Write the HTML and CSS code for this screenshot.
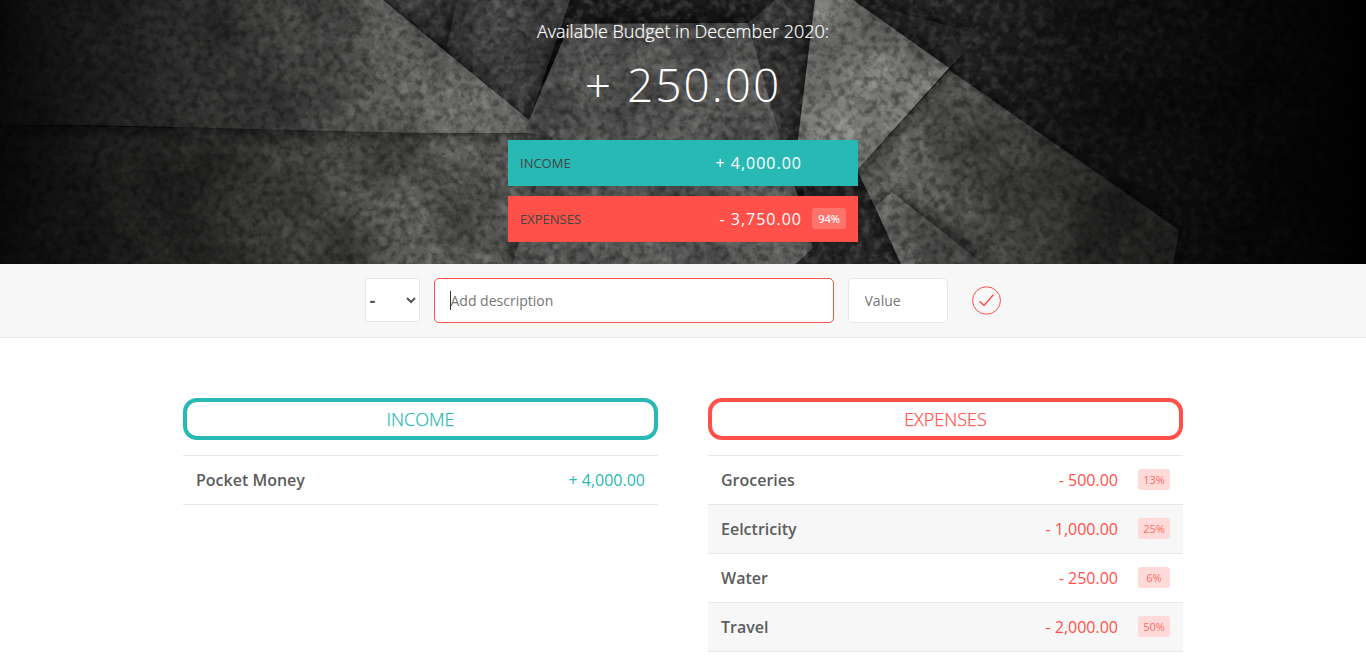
FILE: index.html
```html
<!DOCTYPE html>
<html lang="en">
<head>
<meta charset="utf-8">
<title>Budget</title>
<link rel="stylesheet" href="styles.css">
</head>
<body>
<header class="top">
  <svg class="top-bg" viewBox="0 0 1366 264" preserveAspectRatio="none" aria-hidden="true">
    <defs>
      <filter id="sh" x="-20%" y="-20%" width="140%" height="140%"><feDropShadow dx="0" dy="0" stdDeviation="9" flood-color="#000" flood-opacity=".95"/></filter>
      <filter id="noise" x="0" y="0" width="100%" height="100%">
        <feTurbulence type="fractalNoise" baseFrequency=".13" numOctaves="5" seed="7"/>
        <feColorMatrix type="matrix" values="0 0 0 0 0  0 0 0 0 0  0 0 0 0 0  3 0 0 0 -1.25"/>
      </filter>
      <filter id="noiseLight" x="0" y="0" width="100%" height="100%">
        <feTurbulence type="fractalNoise" baseFrequency=".11" numOctaves="5" seed="31"/>
        <feColorMatrix type="matrix" values="0 0 0 0 1  0 0 0 0 1  0 0 0 0 .97  3.4 0 0 0 -1.5"/>
      </filter>
      <filter id="noise2" x="0" y="0" width="100%" height="100%">
        <feTurbulence type="fractalNoise" baseFrequency=".014" numOctaves="3" seed="21"/>
        <feColorMatrix type="matrix" values="0 0 0 0 0  0 0 0 0 0  0 0 0 0 0  2.6 0 0 0 -1"/>
      </filter>
      <linearGradient id="fadeL"><stop offset="0" stop-color="#000" stop-opacity=".9"/><stop offset=".5" stop-color="#000" stop-opacity=".5"/><stop offset="1" stop-color="#000" stop-opacity="0"/></linearGradient>
      <linearGradient id="fadeR"><stop offset="0" stop-color="#000" stop-opacity="0"/><stop offset=".45" stop-color="#000" stop-opacity=".6"/><stop offset="1" stop-color="#000" stop-opacity=".98"/></linearGradient>
    </defs>
    <rect width="1366" height="264" fill="#1e1e1e"/>
    <polygon points="853,0 1366,0 1366,264 1173,264 1179,230 949,70 983,35" fill="#2b2b2b"/>
    <polygon points="0,125 530,133 553,138 536,187 512,264 0,264" fill="#62625f" filter="url(#sh)"/>
    <polygon points="383,0 457,0 446,50" fill="#454545"/>
    <polygon points="457,0 570,0 529,120 446,50" fill="#474747" filter="url(#sh)"/>
    <polygon points="0,0 383,0 529,120 553,138 530,133 435,133 87,125 0,125" fill="#6b6b67" filter="url(#sh)"/>
    <polygon points="570,24 748,23 781,140 798,197 813,248 796,264 512,264 536,187 553,138 529,120" fill="#5d5d5b" filter="url(#sh)"/>
    <polygon points="748,23 775,0 815,0 798,140 781,140" fill="#363636"/>
    <polygon points="857,170 901,264 796,264 813,248 798,197" fill="#262626"/>
    <polygon points="949,70 1179,230 1173,264 983,264 892,192 875,207 857,170" fill="#636361" filter="url(#sh)"/>
    <polygon points="875,207 892,192 983,264 901,264" fill="#686866" filter="url(#sh)"/>
    <polygon points="853,0 983,35 949,68" fill="#303030" filter="url(#sh)"/>
    <polygon points="815,0 853,0 949,68 857,170 798,140" fill="#868683" filter="url(#sh)"/>
    <rect width="1366" height="264" filter="url(#noise)" opacity=".32"/>
    <rect width="1366" height="264" filter="url(#noiseLight)" opacity=".13"/>
    <rect width="1366" height="264" filter="url(#noise2)" opacity=".3"/>
    <rect width="440" height="264" fill="url(#fadeL)"/>
    <rect x="900" width="466" height="264" fill="url(#fadeR)"/>
  </svg>
  <div class="budget">
    <div class="budget-title">Available Budget in December 2020:</div>
    <div class="budget-value">+ 250.00</div>
    <div class="summary summary-income">
      <div class="summary-label">Income</div>
      <div class="summary-right">
        <div class="summary-value">+ 4,000.00</div>
        <div class="summary-pct summary-pct-empty"></div>
      </div>
    </div>
    <div class="summary summary-expenses">
      <div class="summary-label">Expenses</div>
      <div class="summary-right">
        <div class="summary-value">- 3,750.00</div>
        <div class="summary-pct">94%</div>
      </div>
    </div>
  </div>
</header>

<section class="add">
  <select class="add-type" aria-label="Type">
    <option>+</option>
    <option selected>-</option>
  </select>
  <div class="add-field">
    <input class="add-input add-description" type="text" placeholder="Add description">
    <span class="add-caret"></span>
  </div>
  <input class="add-input add-value" type="text" placeholder="Value">
  <button class="add-btn" type="button" aria-label="Add">
    <svg class="add-icon" viewBox="0 0 29 29" width="29" height="29">
      <ellipse cx="14.5" cy="14.5" rx="14" ry="13.7"/>
      <path class="add-check" d="M7.6 15.2 12 19.4 21.4 8.8"/>
    </svg>
  </button>
</section>

<main class="lists">
  <section class="column column-income">
    <h2 class="column-title">Income</h2>
    <div class="item">
      <div class="item-name">Pocket Money</div>
      <div class="item-right"><div class="item-value">+ 4,000.00</div></div>
    </div>
  </section>
  <section class="column column-expenses">
    <h2 class="column-title">Expenses</h2>
    <div class="item">
      <div class="item-name">Groceries</div>
      <div class="item-right"><div class="item-value">- 500.00</div><div class="item-pct">13%</div></div>
    </div>
    <div class="item">
      <div class="item-name">Eelctricity</div>
      <div class="item-right"><div class="item-value">- 1,000.00</div><div class="item-pct">25%</div></div>
    </div>
    <div class="item">
      <div class="item-name">Water</div>
      <div class="item-right"><div class="item-value">- 250.00</div><div class="item-pct">6%</div></div>
    </div>
    <div class="item">
      <div class="item-name">Travel</div>
      <div class="item-right"><div class="item-value">- 2,000.00</div><div class="item-pct">50%</div></div>
    </div>
  </section>
</main>
</body>
</html>
```
FILE: styles.css
```css
* { margin: 0; padding: 0; box-sizing: border-box; }

html, body { height: 656px; overflow: hidden; }

body {
  font-family: "Open Sans", sans-serif;
  font-size: 16px;
  color: #555;
  background: #fff;
}

.top {
  position: relative;
  height: 264px;
  background: #111;
  overflow: hidden;
}

.top-bg {
  position: absolute;
  inset: 0;
  width: 100%;
  height: 100%;
  display: block;
}

.budget {
  position: relative;
  width: 350px;
  margin: 0 auto;
  padding-top: 19px;
  color: #fff;
}

.budget-title {
  font-size: 18px;
  font-weight: 300;
  line-height: 25px;
  text-align: center;
  margin-bottom: 9px;
  -webkit-text-stroke: .2px #fff;
}

.budget-value {
  font-size: 46px;
  font-weight: 300;
  line-height: 62px;
  letter-spacing: 2px;
  text-align: center;
  margin-bottom: 25px;
}

.summary {
  display: flex;
  justify-content: space-between;
  align-items: center;
  height: 46px;
  padding: 0 12px;
  margin-bottom: 10px;
}

.summary-income { background: #28b9b5; }
.summary-expenses { background: #ff5049; }

.summary-label {
  font-size: 13px;
  color: #444;
  text-transform: uppercase;
}

.summary-right {
  display: flex;
  align-items: center;
  gap: 10px;
}

.summary-value {
  font-size: 16px;
  letter-spacing: 1px;
}

.summary-pct {
  width: 34px;
  margin-bottom: 2px;
  padding: 3px 0;
  font-size: 11px;
  line-height: 15px;
  text-align: center;
  border-radius: 3px;
  background: rgba(255, 255, 255, .2);
  -webkit-text-stroke: .15px #fff;
}

.summary-pct-empty {
  height: 21px;
  background: transparent;
}

.add {
  display: flex;
  justify-content: center;
  align-items: center;
  gap: 14px;
  height: 74px;
  padding: 14px 0;
  background: #f7f7f7;
  border-bottom: 1px solid #e7e7e7;
}

.add-type {
  align-self: flex-start;
  width: 55px;
  height: 44px;
  border: 1px solid #e7e7e7;
  border-radius: 2px;
  background: #fff;
  color: #555;
  font-family: inherit;
  font-size: 18px;
  font-weight: 700;
}

.add-field {
  position: relative;
  display: flex;
}

.add-caret {
  position: absolute;
  left: 16px;
  top: 13px;
  width: 1px;
  height: 19px;
  background: #333;
}

.add-input {
  height: 45px;
  padding: 12px 15px 12px 16px;
  border: 1px solid #e7e7e7;
  border-radius: 5px;
  background: #fff;
  color: #555;
  font-family: inherit;
  font-size: 14px;
  outline: none;
}

.add-description {
  width: 400px;
  border-color: #ff5049;
}

.add-value { width: 100px; }

.add-btn {
  display: flex;
  margin: 0 1px 0 10px;
  border: 0;
  background: none;
}

.add-icon {
  fill: none;
  stroke: #ff5049;
  stroke-width: 1;
}

.add-check { stroke-width: 1.5; }

.lists {
  display: flex;
  justify-content: space-between;
  width: 1000px;
  margin: 60px auto 0;
}

.column { width: 475px; }

.column-title {
  height: 42px;
  margin-bottom: 15px;
  border: 4px solid;
  border-radius: 14px;
  font-size: 18px;
  font-weight: 300;
  line-height: 34px;
  text-align: center;
  text-transform: uppercase;
  -webkit-text-stroke: .25px;
}

.column-income .column-title { color: #28b9b5; border-color: #28b9b5; }
.column-expenses .column-title { color: #ff5049; border-color: #ff5049; }

.item {
  display: flex;
  justify-content: space-between;
  align-items: center;
  height: 49px;
  padding: 0 13px;
  border-bottom: 1px solid #e7e7e7;
}

.column-title + .item {
  height: 50px;
  border-top: 1px solid #e7e7e7;
}

.item:nth-child(odd) { background: #f7f7f7; }

.item-name {
  font-weight: 600;
  color: #5c5c5c;
}

.item-right {
  display: flex;
  align-items: center;
  gap: 20px;
}

.column-income .item-value { color: #28b9b5; }
.column-expenses .item-value { color: #ff5049; }

.item-pct {
  width: 32px;
  margin-bottom: 2px;
  padding: 3px;
  font-size: 11px;
  line-height: 15px;
  text-align: center;
  color: #ff6a64;
  background: #ffdad9;
  border-radius: 3px;
}
```
